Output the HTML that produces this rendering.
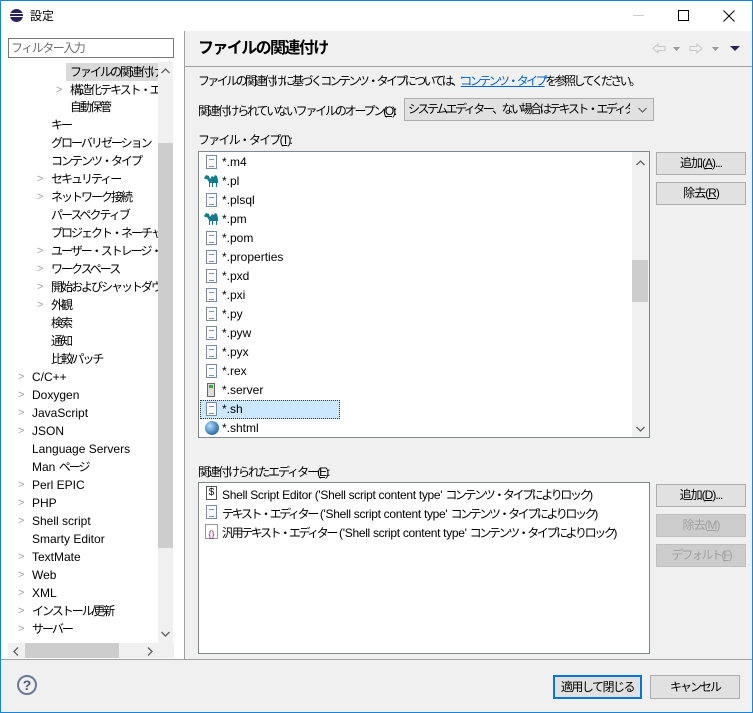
<!DOCTYPE html>
<html><head><meta charset="utf-8"><style>
*{margin:0;padding:0;box-sizing:border-box}
body{width:753px;height:713px;overflow:hidden;background:#f0f0f0;font-family:"Liberation Sans","Noto Sans CJK JP",sans-serif;font-size:12px;color:#000;position:relative}
.a{position:absolute;white-space:nowrap}
.j{letter-spacing:-2px}
.frame{position:absolute;left:0;top:0;width:753px;height:713px;border:1px solid #1883d7;pointer-events:none;z-index:10}
.btn{position:absolute;border:1px solid #adadad;background:#e1e1e1;text-align:center;line-height:20px;font-size:12px;letter-spacing:-1px}
.dis{color:#a0a0a0;background:#ccc;border-color:#bfbfbf}
.tree{position:absolute;left:8px;top:62px;width:150px;height:581px;overflow:hidden}
.tr{position:absolute;font-size:12px;line-height:18px;white-space:nowrap;letter-spacing:-2px}
.tr.l{letter-spacing:0}
.ar{position:absolute;color:#a0a0a0;font-size:11px;line-height:18px}
.fi{position:absolute;left:222px;font-size:12px;line-height:19px}
.ic{position:absolute;left:206px;width:11px;height:14px;border:1px solid #7a8aa0;background:#fff}
.ic:after{content:"";position:absolute;left:2px;top:3px;width:5px;height:6px;border-top:1px solid #8090b0;border-bottom:1px solid #8090b0}
.cm{position:absolute;left:203px}
</style></head><body>
<div class="frame"></div>
<div class="a" style="left:0;top:0;width:753px;height:31px;background:#fff"></div>
<div class="a" style="left:10px;top:9px;width:13px;height:13px;border-radius:50%;background:#2c2255;overflow:hidden"><div style="position:absolute;left:0;top:4px;width:13px;height:1px;background:#fff"></div><div style="position:absolute;left:0;top:7px;width:13px;height:1px;background:#fff"></div></div>
<div class="a" style="left:30px;top:7px;font-size:12px">設定</div>
<div class="a" style="left:633px;top:15px;width:11px;height:1px;background:#ccc"></div>
<div class="a" style="left:678px;top:10px;width:11px;height:11px;border:1px solid #000"></div>
<svg class="a" style="left:723px;top:10px" width="12" height="12"><path d="M0.5 0.5L11.5 11.5M11.5 0.5L0.5 11.5" stroke="#000" stroke-width="1"/></svg>
<div class="a" style="left:1px;top:31px;width:183px;height:628px;background:#fff"></div>
<div class="a" style="left:184px;top:31px;width:1px;height:628px;background:#a0a0a0"></div>
<div class="a j" style="left:8px;top:38px;width:166px;height:20px;border:1px solid #7a7a7a;color:#6d6d6d;padding-left:2px;line-height:18px;letter-spacing:-1.5px">フィルター入力</div>
<div class="a" style="left:158px;top:62px;width:15px;height:581px;background:#f0f0f0"></div>
<div class="a" style="left:158px;top:143px;width:15px;height:405px;background:#cdcdcd"></div>
<svg class="a" style="left:161px;top:68px" width="9" height="6"><path d="M0.5 5L4.5 1L8.5 5" stroke="#606060" fill="none" stroke-width="1.3"/></svg>
<svg class="a" style="left:161px;top:631px" width="9" height="6"><path d="M0.5 1L4.5 5L8.5 1" stroke="#606060" fill="none" stroke-width="1.3"/></svg>
<div class="a" style="left:8px;top:643px;width:166px;height:15px;background:#f0f0f0"></div>
<div class="a" style="left:25px;top:643px;width:94px;height:15px;background:#cdcdcd"></div>
<svg class="a" style="left:13px;top:647px" width="6" height="9"><path d="M5 0.5L1 4.5L5 8.5" stroke="#606060" fill="none" stroke-width="1.3"/></svg>
<svg class="a" style="left:147px;top:647px" width="6" height="9"><path d="M1 0.5L5 4.5L1 8.5" stroke="#606060" fill="none" stroke-width="1.3"/></svg>
<div class="tree">
<div class="a" style="left:58px;top:1px;width:92px;height:18px;background:#d9d9d9"></div>
<div class="tr" style="left:62px;top:1px">ファイルの関連付け</div>
<div class="ar" style="left:48px;top:19px">&gt;</div><div class="tr" style="left:62px;top:19px">構造化テキスト・エディター</div>
<div class="tr" style="left:62px;top:36px">自動保管</div>
<div class="tr" style="left:43px;top:54px">キー</div>
<div class="tr" style="left:43px;top:72px">グローバリゼーション</div>
<div class="tr" style="left:43px;top:90px">コンテンツ・タイプ</div>
<div class="ar" style="left:29px;top:108px">&gt;</div><div class="tr" style="left:43px;top:108px">セキュリティー</div>
<div class="ar" style="left:29px;top:126px">&gt;</div><div class="tr" style="left:43px;top:126px">ネットワーク接続</div>
<div class="tr" style="left:43px;top:144px">パースペクティブ</div>
<div class="tr" style="left:43px;top:162px">プロジェクト・ネーチャー</div>
<div class="ar" style="left:29px;top:180px">&gt;</div><div class="tr" style="left:43px;top:180px">ユーザー・ストレージ・サービス</div>
<div class="ar" style="left:29px;top:198px">&gt;</div><div class="tr" style="left:43px;top:198px">ワークスペース</div>
<div class="ar" style="left:29px;top:216px">&gt;</div><div class="tr" style="left:43px;top:216px">開始およびシャットダウン</div>
<div class="ar" style="left:29px;top:234px">&gt;</div><div class="tr" style="left:43px;top:234px">外観</div>
<div class="tr" style="left:43px;top:252px">検索</div>
<div class="tr" style="left:43px;top:270px">通知</div>
<div class="tr" style="left:43px;top:288px">比較/パッチ</div>
<div class="ar" style="left:10px;top:306px">&gt;</div><div class="tr l" style="left:24px;top:306px">C/C++</div>
<div class="ar" style="left:10px;top:324px">&gt;</div><div class="tr l" style="left:24px;top:324px">Doxygen</div>
<div class="ar" style="left:10px;top:342px">&gt;</div><div class="tr l" style="left:24px;top:342px">JavaScript</div>
<div class="ar" style="left:10px;top:360px">&gt;</div><div class="tr l" style="left:24px;top:360px">JSON</div>
<div class="tr l" style="left:24px;top:378px">Language Servers</div>
<div class="tr l" style="left:24px;top:396px">Man <span style="letter-spacing:-2px">ページ</span></div>
<div class="ar" style="left:10px;top:414px">&gt;</div><div class="tr l" style="left:24px;top:414px">Perl EPIC</div>
<div class="ar" style="left:10px;top:432px">&gt;</div><div class="tr l" style="left:24px;top:432px">PHP</div>
<div class="ar" style="left:10px;top:450px">&gt;</div><div class="tr l" style="left:24px;top:450px">Shell script</div>
<div class="tr l" style="left:24px;top:468px">Smarty Editor</div>
<div class="ar" style="left:10px;top:486px">&gt;</div><div class="tr l" style="left:24px;top:486px">TextMate</div>
<div class="ar" style="left:10px;top:504px">&gt;</div><div class="tr l" style="left:24px;top:504px">Web</div>
<div class="ar" style="left:10px;top:522px">&gt;</div><div class="tr l" style="left:24px;top:522px">XML</div>
<div class="ar" style="left:10px;top:540px">&gt;</div><div class="tr" style="left:24px;top:540px">インストール/更新</div>
<div class="ar" style="left:10px;top:558px">&gt;</div><div class="tr" style="left:24px;top:558px">サーバー</div>
</div>
<div class="a" style="left:198px;top:38px;font-size:16px;font-weight:bold;line-height:22px;letter-spacing:-1.6px">ファイルの関連付け</div>
<svg class="a" style="left:652px;top:42px" width="90" height="14">
<path d="M1 6.5L6 2V4.5H13V8.5H6V11Z" fill="none" stroke="#c8c8c8"/><path d="M21 5H28L24.5 9Z" fill="#999"/>
<path d="M50 6.5L45 2V4.5H38V8.5H45V11Z" fill="none" stroke="#c8c8c8"/><path d="M60 5H67L63.5 9Z" fill="#999"/>
<path d="M78 4H88L83 9Z" fill="#2c2255"/></svg>
<div class="a" style="left:185px;top:66px;width:567px;height:1px;background:#a0a0a0"></div>
<div class="a" style="left:198px;top:72px;letter-spacing:-2.6px">ファイルの関連付けに基づくコンテンツ・タイプについては、<span style="color:#0066cc;text-decoration:underline">'コンテンツ・タイプ'</span> を参照してください。</div>
<div class="a" style="left:198px;top:102px;letter-spacing:-2.2px">関連付けられていないファイルのオープン(<u>O</u>):</div>
<div class="a" style="left:404px;top:98px;width:250px;height:23px;border:1px solid #adadad;background:#e1e1e1"></div>
<div class="a" style="left:408px;top:99px;width:222px;overflow:hidden;line-height:21px;letter-spacing:-2.5px">システムエディター、ない場合はテキスト・エディター</div>
<svg class="a" style="left:638px;top:107px" width="9" height="6"><path d="M0.5 1L4.5 5L8.5 1" stroke="#606060" fill="none" stroke-width="1.2"/></svg>
<div class="a" style="left:198px;top:131px;letter-spacing:-1.8px">ファイル・タイプ(<u>T</u>):</div>
<div class="a" style="left:198px;top:151px;width:452px;height:287px;border:1px solid #828790;background:#fff"></div>
<div class="a" style="left:632px;top:152px;width:17px;height:285px;background:#f0f0f0"></div>
<div class="a" style="left:632px;top:260px;width:16px;height:42px;background:#cdcdcd"></div>
<svg class="a" style="left:636px;top:160px" width="9" height="6"><path d="M0.5 5L4.5 1L8.5 5" stroke="#606060" fill="none" stroke-width="1.3"/></svg>
<svg class="a" style="left:636px;top:426px" width="9" height="6"><path d="M0.5 1L4.5 5L8.5 1" stroke="#606060" fill="none" stroke-width="1.3"/></svg>
<div class="a" style="left:200px;top:400px;width:140px;height:19px;background:#cce8ff;border:1px dotted #333"></div>
<div class="ic" style="top:155px"></div><div class="fi" style="top:153px">*.m4</div>
<svg class="cm" style="top:173px" width="17" height="15"><path d="M1 5L3 2L6 3L7 6L9 3L11 4L12 2L14 3L15 7L15 10H14V14H13V10H10V14H9V10H7V14H6V9L4 6L2 6Z" fill="#157a8c"/></svg><div class="fi" style="top:172px">*.pl</div>
<div class="ic" style="top:193px"></div><div class="fi" style="top:191px">*.plsql</div>
<svg class="cm" style="top:211px" width="17" height="15"><path d="M1 5L3 2L6 3L7 6L9 3L11 4L12 2L14 3L15 7L15 10H14V14H13V10H10V14H9V10H7V14H6V9L4 6L2 6Z" fill="#157a8c"/></svg><div class="fi" style="top:210px">*.pm</div>
<div class="ic" style="top:231px"></div><div class="fi" style="top:229px">*.pom</div>
<div class="ic" style="top:250px"></div><div class="fi" style="top:248px">*.properties</div>
<div class="ic" style="top:269px"></div><div class="fi" style="top:267px">*.pxd</div>
<div class="ic" style="top:288px"></div><div class="fi" style="top:286px">*.pxi</div>
<div class="ic" style="top:307px"></div><div class="fi" style="top:305px">*.py</div>
<div class="ic" style="top:326px"></div><div class="fi" style="top:324px">*.pyw</div>
<div class="ic" style="top:345px"></div><div class="fi" style="top:343px">*.pyx</div>
<div class="ic" style="top:364px"></div><div class="fi" style="top:362px">*.rex</div>
<div class="a" style="left:207px;top:383px;width:8px;height:14px;border:1px solid #666;background:#ddd"><div style="margin:1px;height:3px;background:#3a3"></div></div><div class="fi" style="top:381px">*.server</div>
<div class="ic" style="top:402px"></div><div class="fi" style="top:400px">*.sh</div>
<div class="a" style="left:205px;top:421px;width:14px;height:14px;border-radius:50%;background:radial-gradient(circle at 35% 35%,#bde,#3a7fbf 60%,#2a6a3a)"></div><div class="fi" style="top:419px">*.shtml</div>
<div class="btn" style="left:656px;top:152px;width:90px;height:23px">追加(<u>A</u>)...</div>
<div class="btn" style="left:656px;top:182px;width:90px;height:23px">除去(<u>R</u>)</div>
<div class="a" style="left:198px;top:463px;letter-spacing:-2px">関連付けられたエディター(<u>E</u>):</div>
<div class="a" style="left:198px;top:482px;width:452px;height:172px;border:1px solid #828790;background:#fff"></div>
<div class="a" style="left:206px;top:486px;width:11px;height:14px;border:1px solid #555;font-size:10px;line-height:12px;text-align:center;background:#fff">$</div>
<div class="a" style="left:222px;top:486px;letter-spacing:-0.3px">Shell Script Editor ('Shell script content type' <span style="letter-spacing:-2.4px">コンテンツ・タイプによりロック)</span></div>
<div class="ic" style="top:505px"></div>
<div class="a" style="left:222px;top:505px;letter-spacing:-0.3px"><span style="letter-spacing:-2.4px">テキスト・エディター</span> ('Shell script content type' <span style="letter-spacing:-2.4px">コンテンツ・タイプによりロック)</span></div>
<div class="a" style="left:205px;top:524px;width:13px;height:15px;border:1px solid #999;background:#fff;color:#7a1a6a;font-size:9px;line-height:18px;text-align:center">{}</div>
<div class="a" style="left:222px;top:524px;letter-spacing:-0.3px"><span style="letter-spacing:-2.4px">汎用テキスト・エディター</span> ('Shell script content type' <span style="letter-spacing:-2.4px">コンテンツ・タイプによりロック)</span></div>
<div class="btn" style="left:656px;top:484px;width:90px;height:23px">追加(<u>D</u>)...</div>
<div class="btn dis" style="left:656px;top:514px;width:90px;height:23px">除去(<u>M</u>)</div>
<div class="btn dis" style="left:656px;top:544px;width:90px;height:23px;letter-spacing:-2px">デフォルト(<u>F</u>)</div>
<div class="a" style="left:1px;top:659px;width:751px;height:1px;background:#a0a0a0"></div>
<div class="a" style="left:17px;top:675px;width:20px;height:20px;border:2px solid #6a7a95;border-radius:50%;color:#4a5a75;font-weight:bold;font-size:14px;line-height:16px;text-align:center">?</div>
<div class="btn" style="left:553px;top:675px;width:89px;height:24px;border:2px solid #0078d7;line-height:20px;letter-spacing:-1.5px">適用して閉じる</div>
<div class="btn" style="left:650px;top:675px;width:90px;height:24px;line-height:22px;letter-spacing:-2px">キャンセル</div>
</body></html>
